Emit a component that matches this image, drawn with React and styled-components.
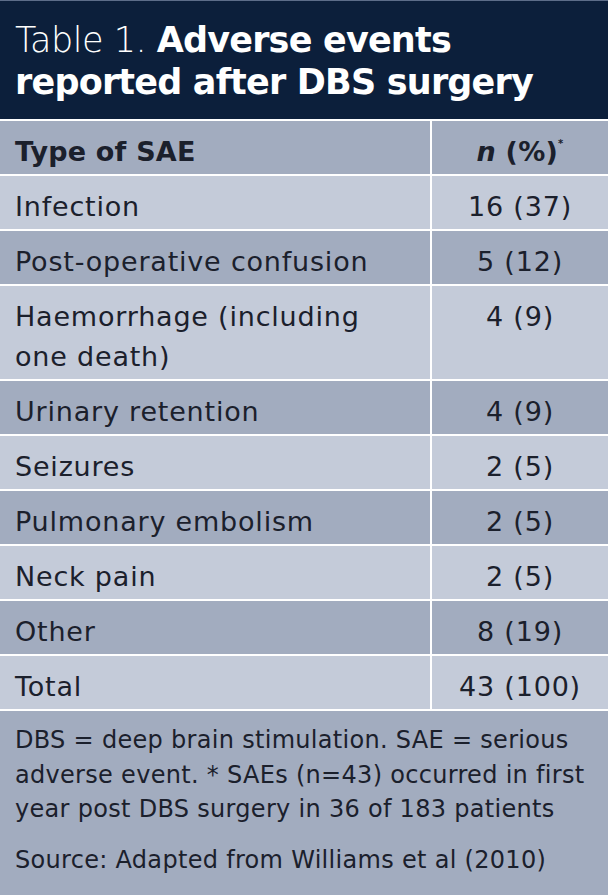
import styled, { createGlobalStyle } from 'styled-components';

const GlobalStyle = createGlobalStyle`
	html, body {
		margin: 0;
		padding: 0;
		background: #a2acbf;
	}
	* {
		box-sizing: border-box;
	}
`;

const Card = styled.div`
	width: 608px;
	height: 895px;
	display: flex;
	flex-direction: column;
	background: #ffffff;
	font-family: 'DejaVu Sans', 'Noto Sans', sans-serif;
	color: #1b202c;
	overflow: hidden;
`;

const TitleBar = styled.div`
	background: #0c1f3b;
	border-top: 1px solid #5d6d89;
	height: 119px;
	padding: 18px 15px 0;
	color: #ffffff;
	font-size: 35px;
	line-height: 42px;
	letter-spacing: -0.8px;

	.light {
		font-weight: 200;
		letter-spacing: -0.5px;
	}
	.bold {
		font-weight: 700;
	}
`;

const Grid = styled.div`
	display: grid;
	grid-template-columns: 430px 1fr;
	column-gap: 2px;
	row-gap: 2px;
	padding-top: 2px;
	background: #ffffff;
`;

const Cell = styled.div`
	background: ${(p) => (p.$dark ? '#a2acbf' : '#c4cbd9')};
	min-height: 53px;
	padding: ${(p) => (p.$center ? '11px 0 2px' : '11px 15px 2px')};
	text-align: ${(p) => (p.$center ? 'center' : 'left')};
	font-size: 27px;
	line-height: 40px;
	font-weight: ${(p) => (p.$head ? 700 : 400)};
	letter-spacing: ${(p) => (p.$head ? '0.2px' : '0.8px')};

	em {
		font-style: italic;
	}
	sup {
		font-size: 10px;
		vertical-align: 14px;
		line-height: 0;
	}
`;

const Footnote = styled.div`
	flex: 1;
	margin-top: 2px;
	background: #a2acbf;
	padding: 12px 15px 0;
	font-size: 24px;
	line-height: 34.5px;
	letter-spacing: 0.3px;

	p {
		margin: 0 0 16px;
	}
`;

const rows = [
	['Infection', '16 (37)'],
	['Post-operative confusion', '5 (12)'],
	['Haemorrhage (including one death)', '4 (9)'],
	['Urinary retention', '4 (9)'],
	['Seizures', '2 (5)'],
	['Pulmonary embolism', '2 (5)'],
	['Neck pain', '2 (5)'],
	['Other', '8 (19)'],
	['Total', '43 (100)'],
];

const App = () => {
	return (
		<>
			<GlobalStyle />
			<Card>
				<TitleBar>
					<span className="light">Table 1. </span>
					<span className="bold">
						Adverse events
						<br />
						reported after DBS surgery
					</span>
				</TitleBar>
				<Grid>
					<Cell $dark $head>
						Type of SAE
					</Cell>
					<Cell $dark $head $center>
						<em>n</em> (%)<sup>*</sup>
					</Cell>
					{rows.map(([label, value], i) => (
						<>
							<Cell key={label} $dark={i % 2 === 1}>
								{label}
							</Cell>
							<Cell key={label + '-v'} $dark={i % 2 === 1} $center>
								{value}
							</Cell>
						</>
					))}
				</Grid>
				<Footnote>
					<p>
						DBS = deep brain stimulation. SAE = serious adverse event. * SAEs
						(n=43) occurred in first year post DBS surgery in 36 of 183 patients
					</p>
					<p>Source: Adapted from Williams et al (2010)</p>
				</Footnote>
			</Card>
		</>
	);
};

export default App;
